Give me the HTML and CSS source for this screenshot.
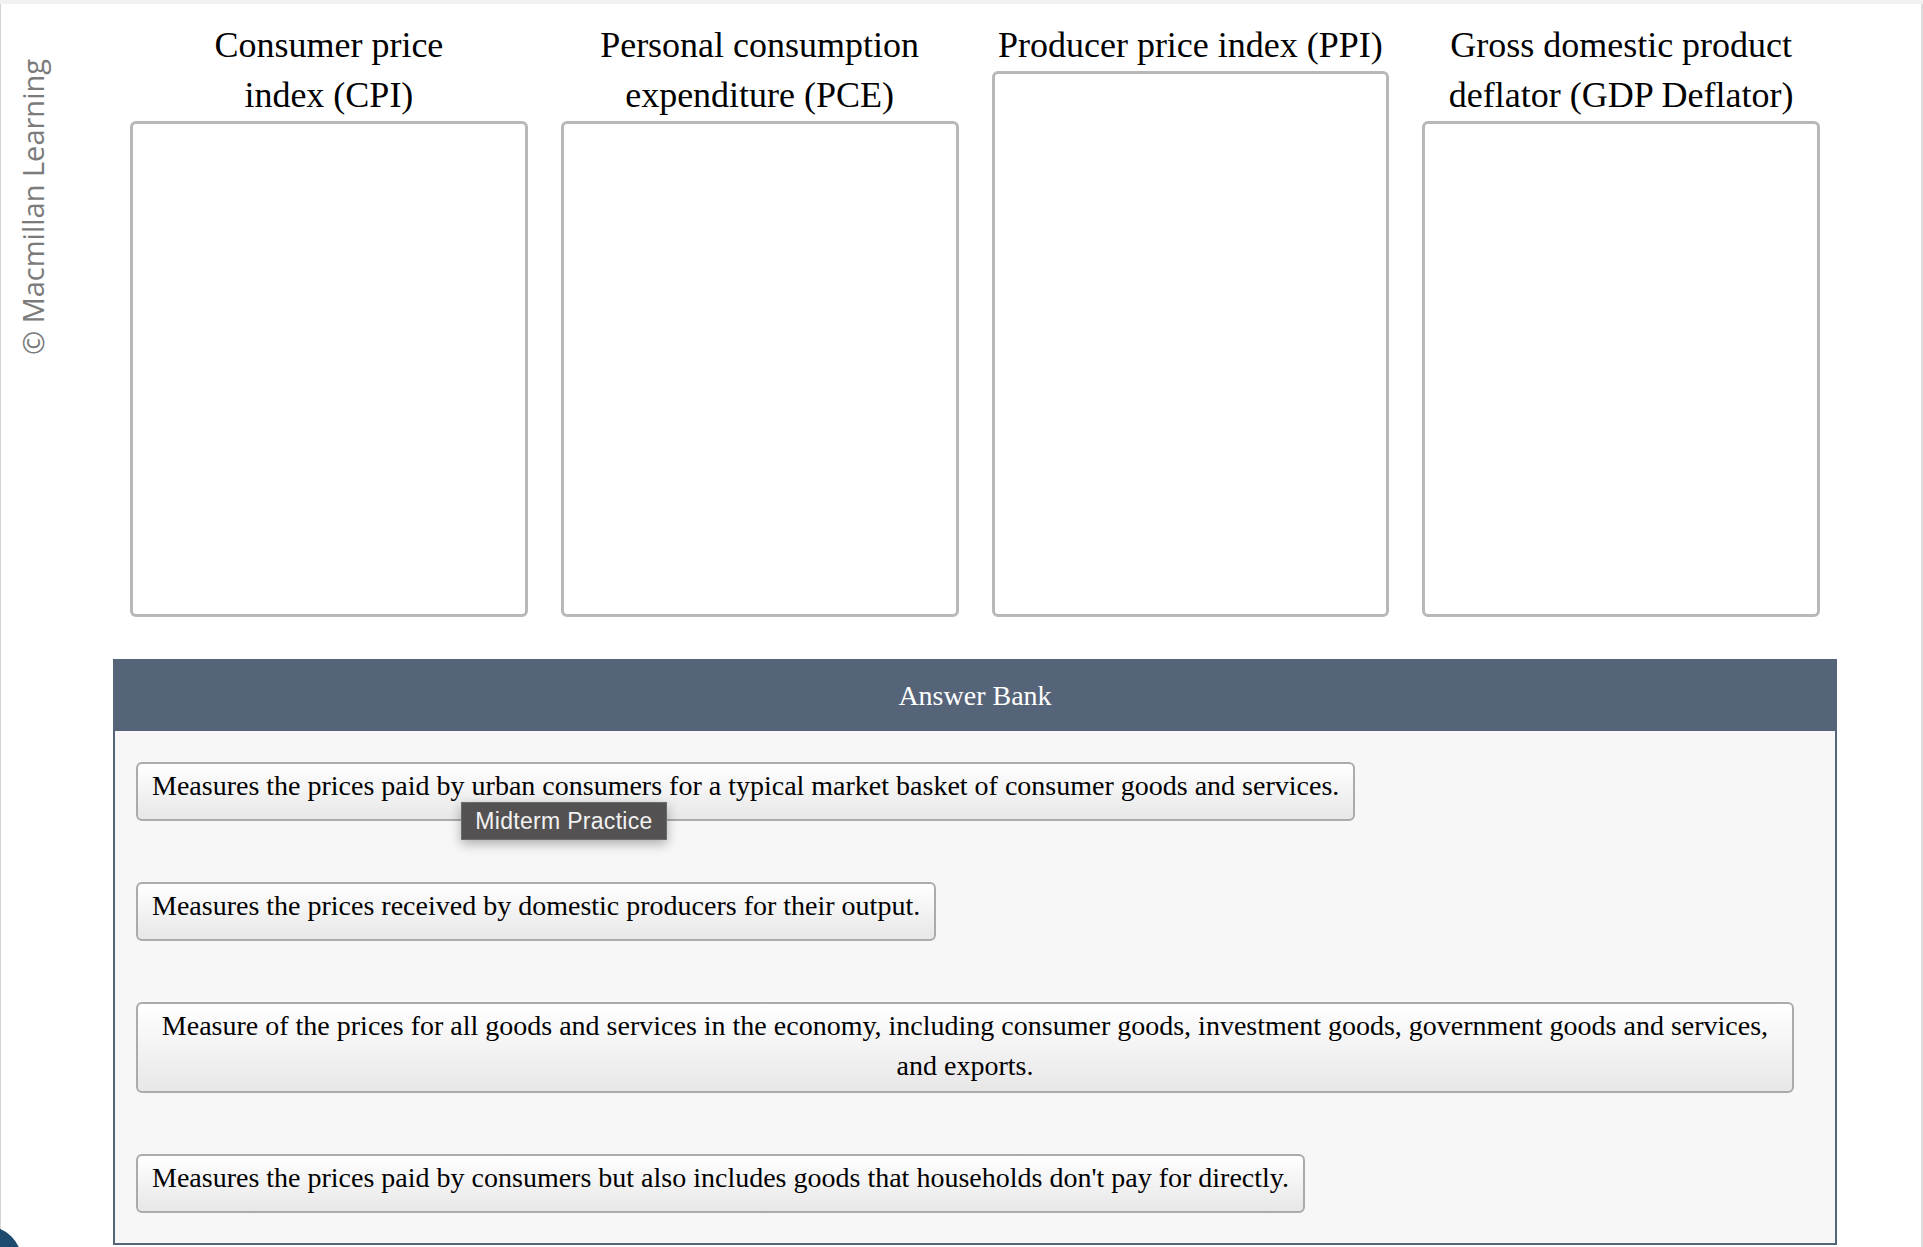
FILE: index.html
```html
<!DOCTYPE html>
<html lang="en">
<head>
<meta charset="utf-8">
<title>Price indexes</title>
<link rel="stylesheet" href="styles.css">
</head>
<body>
<div class="page">
  <div class="topbar"></div>
  <div class="frame">
    <aside class="side">
      <div class="copyright">© Macmillan Learning</div>
    </aside>
    <main class="main">
      <div class="columns">
        <div class="col">
          <div class="col-title">Consumer price<br>index (CPI)</div>
          <div class="drop"></div>
        </div>
        <div class="col">
          <div class="col-title">Personal consumption<br>expenditure (PCE)</div>
          <div class="drop"></div>
        </div>
        <div class="col">
          <div class="col-title">Producer price index (PPI)</div>
          <div class="drop"></div>
        </div>
        <div class="col">
          <div class="col-title">Gross domestic product<br>deflator (GDP Deflator)</div>
          <div class="drop"></div>
        </div>
      </div>
      <section class="bank">
        <div class="bank-head">Answer Bank</div>
        <div class="bank-body">
          <div class="item">Measures the prices paid by urban consumers for a typical market basket of consumer goods and services.</div>
          <div class="item">Measures the prices received by domestic producers for their output.</div>
          <div class="item">Measure of the prices for all goods and services in the economy, including consumer goods, investment goods, government goods and services, and exports.</div>
          <div class="item">Measures the prices paid by consumers but also includes goods that households don't pay for directly.</div>
        </div>
      </section>
    </main>
  </div>
  <div class="tooltip">Midterm Practice</div>
  <div class="help"></div>
</div>
</body>
</html>
```
FILE: styles.css
```css
* { box-sizing: border-box; }
html, body {
  margin: 0;
  padding: 0;
  background: #ffffff;
}
body {
  font-family: "Liberation Serif", "Times New Roman", serif;
  color: #000;
  overflow: hidden;
}
.page {
  position: relative;
  width: 1923px;
  height: 1247px;
  overflow: hidden;
}
.topbar {
  height: 4px;
  background: #f2f2f2;
}
.frame {
  display: flex;
  height: 1243px;
  border-left: 1px solid #d4d4d4;
  border-right: 2px solid #dcdcdc;
}
.side {
  width: 112px;
  flex: none;
  padding: 55px 0 0 15px;
}
.copyright {
  writing-mode: vertical-rl;
  text-orientation: sideways;
  transform: rotate(180deg);
  font-family: "Open Sans", "Noto Sans", sans-serif;
  font-size: 29px;
  line-height: 34px;
  color: #7b7b7b;
  white-space: nowrap;
}
.main {
  width: 1724px;
  flex: none;
}
.columns {
  display: grid;
  grid-template-columns: repeat(4, 1fr);
  column-gap: 33px;
  padding: 16px 17px 0 17px;
}
.col {
  display: flex;
  flex-direction: column;
}
.col-title {
  font-size: 36px;
  line-height: 50px;
  text-align: center;
  white-space: nowrap;
}
.drop {
  flex: 1;
  min-height: 496px;
  margin-top: 1px;
  border: 3px solid #b8b8b8;
  border-radius: 6px;
  background: #fff;
}
.bank {
  margin-top: 42px;
  border: 2px solid #566479;
  background: #f7f7f7;
}
.bank-head {
  height: 70px;
  line-height: 70px;
  background: #566479;
  color: #ffffff;
  text-align: center;
  font-size: 28px;
}
.bank-body {
  display: flex;
  flex-direction: column;
  align-items: flex-start;
  gap: 61px;
  padding: 31px 41px 30px 21px;
}
.item {
  max-width: 100%;
  min-height: 59px;
  padding: 2px 14px 5px;
  border: 2px solid #ababab;
  border-radius: 6px;
  background: linear-gradient(#ffffff, #e7e7e7);
  font-size: 28px;
  line-height: 40px;
  text-align: center;
}
.tooltip {
  position: absolute;
  left: 461px;
  top: 802px;
  width: 206px;
  height: 38px;
  background: #535151;
  border: 1px solid #6b6b6b;
  color: #f2f2f2;
  font-family: "Liberation Sans", Arial, sans-serif;
  font-size: 23px;
  letter-spacing: 0.3px;
  line-height: 36px;
  text-align: center;
  box-shadow: 0 4px 12px rgba(0, 0, 0, 0.3);
}
.help {
  position: absolute;
  left: -50px;
  top: 1226px;
  width: 72px;
  height: 72px;
  border-radius: 50%;
  background: #1d4a6f;
}
```
